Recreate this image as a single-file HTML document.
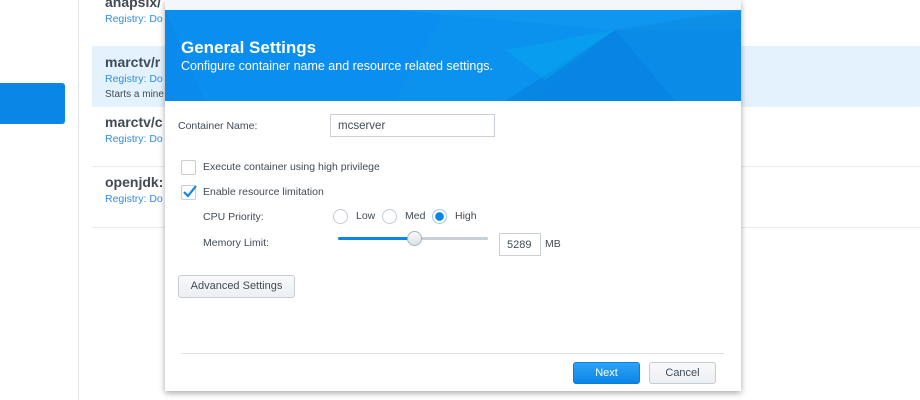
<!DOCTYPE html>
<html><head><meta charset="utf-8"><style>
*{box-sizing:border-box;margin:0;padding:0}
html,body{background:#fff}
body{width:920px;height:400px;overflow:hidden;font-family:"Liberation Sans",sans-serif;position:relative;font-size:11px;color:#414b55}
.abs{position:absolute}
.side{left:0;top:0;width:79px;height:400px;border-right:1px solid #e3e6ea;background:#fff}
.sbtn{left:0;top:83px;width:65px;height:41px;background:#0a86e6;border-radius:0 3px 3px 0}
.name{font-weight:bold;font-size:14px;color:#414b55}
.reg{color:#2e8ee6;font-size:10.5px}
.sep{height:1px;background:#e8ebee;left:92px;right:0}
.dlg{left:165px;top:0;width:576px;height:391px;background:#fff;box-shadow:0 2px 6px rgba(0,0,0,.35);}
.hdr{left:0;top:10px;width:576px;height:91px;background:#0a8ef0;overflow:hidden}
.cb{width:15px;height:15px;border:1px solid #c9cfd6;border-radius:2px;background:#fff}
.lbl{font-size:10.5px;color:#414b55}
.radio{width:15px;height:15px;border:1px solid #c5ccd4;border-radius:50%;background:#fff}
.btn{border:1px solid #c6ccd3;border-radius:3px;background:linear-gradient(#f8f9fb,#eceff3);text-align:center;font-size:11px;color:#414b55}
</style></head><body>
<div class="abs side"></div>
<div class="abs sbtn"></div>
<div class="abs" style="left:92px;top:46px;width:828px;height:61px;background:#e3f2fd"></div>
<div class="abs name" style="left:105px;top:-6px">anapsix/</div>
<div class="abs reg" style="left:105px;top:13px">Registry: Do</div>
<div class="abs name" style="left:105px;top:54px">marctv/r</div>
<div class="abs reg" style="left:105px;top:73px">Registry: Do</div>
<div class="abs" style="left:105px;top:89px;font-size:10px;color:#414b55">Starts a mine</div>
<div class="abs name" style="left:105px;top:114px">marctv/c</div>
<div class="abs reg" style="left:105px;top:133px">Registry: Do</div>
<div class="abs sep" style="top:166px"></div>
<div class="abs name" style="left:105px;top:174px">openjdk:</div>
<div class="abs reg" style="left:105px;top:193px">Registry: Do</div>
<div class="abs sep" style="top:227px"></div>

<div class="abs dlg">
 <div class="abs" style="left:0;top:0;width:576px;height:10px;background:#f3f7fb"></div>
 <div class="abs hdr">
  <svg width="576" height="91" style="position:absolute;left:0;top:0">
   <polygon points="230,0 576,0 576,20 450,20" fill="#1aa6f2" opacity=".35"/>
   <polygon points="280,0 450,20 370,91 230,91" fill="#0f9cf0" opacity=".3"/>
   <polygon points="450,20 576,0 576,91 510,91" fill="#0b88e0" opacity=".5"/>
   <polygon points="450,20 510,91 340,91" fill="#0479d8" opacity=".5"/>
   <polygon points="340,40 450,20 380,70" fill="#06b2f4" opacity=".35"/>
   <polygon points="0,0 40,91 0,91" fill="#0b84e8" opacity=".4"/>
  </svg>
  <div class="abs" style="left:16px;top:28px;color:#fff;font-weight:bold;font-size:17px">General Settings</div>
  <div class="abs" style="left:16px;top:49px;color:#fff;font-size:12.5px">Configure container name and resource related settings.</div>
 </div>
 <div class="abs lbl" style="left:13px;top:120px">Container Name:</div>
 <div class="abs" style="left:165px;top:114px;width:165px;height:23px;border:1px solid #c9cfd6;font-size:11.5px;padding:5px 7px;color:#414b55">mcserver</div>
 <div class="abs cb" style="left:16px;top:160px"></div>
 <div class="abs lbl" style="left:38px;top:161px">Execute container using high privilege</div>
 <div class="abs cb" style="left:16px;top:185px"></div>
 <svg class="abs" style="left:16px;top:183px" width="18" height="16"><path d="M3 9 L7 13 L15 3" stroke="#0a86e6" stroke-width="2.2" fill="none"/></svg>
 <div class="abs lbl" style="left:38px;top:186px">Enable resource limitation</div>
 <div class="abs lbl" style="left:38px;top:211px">CPU Priority:</div>
 <div class="abs radio" style="left:168px;top:209px"></div>
 <div class="abs lbl" style="left:191px;top:210px">Low</div>
 <div class="abs radio" style="left:217px;top:209px"></div>
 <div class="abs lbl" style="left:240px;top:210px">Med</div>
 <div class="abs radio" style="left:267px;top:209px;border-color:#9fc9ee;background:radial-gradient(circle,#0a86e6 0,#0a86e6 4px,#fff 4.6px)"></div>
 <div class="abs lbl" style="left:290px;top:210px">High</div>
 <div class="abs lbl" style="left:38px;top:237px">Memory Limit:</div>
 <div class="abs" style="left:173px;top:237px;width:150px;height:3px;background:#c9cfd6;border-radius:2px"></div>
 <div class="abs" style="left:173px;top:237px;width:77px;height:3px;background:#0a86e6;border-radius:2px"></div>
 <div class="abs" style="left:242px;top:231px;width:15px;height:15px;border-radius:50%;background:linear-gradient(#fafafa,#dde1e5);border:1px solid #aab2ba"></div>
 <div class="abs" style="left:334px;top:233px;width:42px;height:23px;border:1px solid #c9cfd6;font-size:11px;padding:5px 7px">5289</div>
 <div class="abs lbl" style="left:380px;top:238px">MB</div>
 <div class="abs btn" style="left:13px;top:275px;width:117px;height:23px;line-height:21px">Advanced Settings</div>
 <div class="abs" style="left:16px;top:353px;width:543px;height:1px;background:#dfe3e7"></div>
 <div class="abs" style="left:408px;top:362px;width:67px;height:22px;border-radius:3px;background:linear-gradient(#2ea2f7,#0a86e6);border:1px solid #0a7ed8;color:#fff;text-align:center;line-height:20px;font-size:11px">Next</div>
 <div class="abs btn" style="left:484px;top:362px;width:67px;height:22px;line-height:20px">Cancel</div>
</div>
</body></html>
